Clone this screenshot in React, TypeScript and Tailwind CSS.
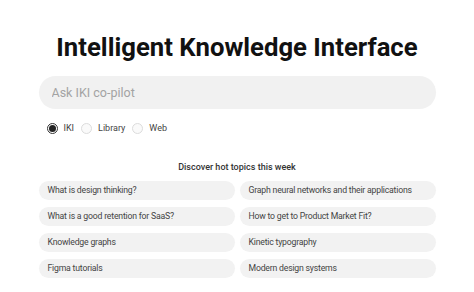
import { useState } from "react";

const topics = [
  "What is design thinking?",
  "Graph neural networks and their applications",
  "What is a good retention for SaaS?",
  "How to get to Product Market Fit?",
  "Knowledge graphs",
  "Kinetic typography",
  "Figma tutorials",
  "Modern design systems",
];

const sources = ["IKI", "Library", "Web"];

export default function App() {
  const [source, setSource] = useState("IKI");
  const [query, setQuery] = useState("");

  return (
    <div className="min-h-screen bg-white font-['Roboto',sans-serif]">
      <div className="mx-auto w-[397px] pt-[32px]">
        <h1 className="text-center text-[25.7px] leading-[30px] font-bold text-[#111]">
          Intelligent Knowledge Interface
        </h1>

        <input
          value={query}
          onChange={(e) => setQuery(e.target.value)}
          placeholder="Ask IKI co-pilot"
          className="mt-[14px] h-[33px] w-full rounded-full bg-[#f1f1f1] px-[13px] text-[12.5px] text-[#333] placeholder:text-[#a3a3a3] outline-none"
        />

        <div className="mt-[13px] flex items-center gap-[7px] pl-[8px] text-[9px] text-[#444]">
          {sources.map((s) => (
            <label key={s} className="flex items-center gap-[6px] cursor-pointer" onClick={() => setSource(s)}>
              <span
                className={
                  source === s
                    ? "flex h-[11px] w-[11px] items-center justify-center rounded-full border border-[#333]"
                    : "h-[11px] w-[11px] rounded-full border border-[#dcdcdc] bg-[#fafafa]"
                }
              >
                {source === s && <span className="h-[7px] w-[7px] rounded-full bg-[#222]" />}
              </span>
              <span>{s}</span>
            </label>
          ))}
        </div>

        <p className="mt-[25px] text-center text-[9px] font-medium text-[#333]">
          Discover hot topics this week
        </p>

        <div className="mt-[7px] grid grid-cols-2 gap-x-[5px] gap-y-[7px]">
          {topics.map((t) => (
            <button
              key={t}
              className="h-[19px] rounded-full bg-[#f2f2f2] px-[9px] text-left text-[8.7px] tracking-[-0.2px] text-[#444]"
            >
              {t}
            </button>
          ))}
        </div>
      </div>
    </div>
  );
}
